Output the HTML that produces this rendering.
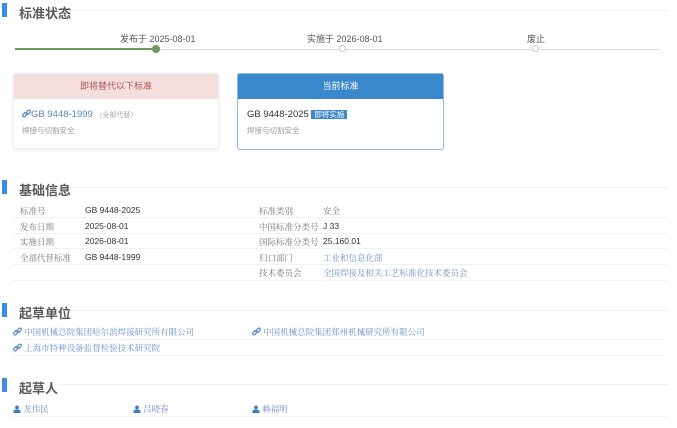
<!DOCTYPE html>
<html><head><meta charset="utf-8"><style>
*{margin:0;padding:0;box-sizing:border-box}
body{width:677px;height:428px;background:#fff;position:relative;overflow:hidden;font-family:"Liberation Sans","Noto Sans CJK SC",sans-serif;color:#444}
.a{position:absolute;white-space:nowrap}
.bar{position:absolute;left:2px;width:5px;height:14px;background:#3a8ee6}
.ht{position:absolute;left:19px;font-size:13px;color:#5a5a5a;font-weight:bold}
.hl{position:absolute;height:1px;background:#eceff2;right:9px}
.s{font-family:"Liberation Serif","Noto Serif CJK SC",serif;font-size:8.5px;color:#777}
.v{font-size:8.5px;color:#333}
.lk{font-family:"Liberation Serif","Noto Serif CJK SC",serif;font-size:8.5px;color:#6b8fc6}
.rl{position:absolute;left:13px;right:9px;height:1px;background:#f0f2f4}
svg{vertical-align:-1px}
</style></head><body>
<svg width="0" height="0" style="position:absolute"><defs>
<symbol id="lnk" viewBox="0 0 10 10"><g fill="none" stroke="#5b86c0" stroke-width="1.4" stroke-linecap="round"><path d="M4.2 5.8l1.6-1.6"/><path d="M5.5 2.7l1-1a1.6 1.6 0 0 1 2.3 2.3l-1.6 1.6a1.6 1.6 0 0 1-2.3 0"/><path d="M4.5 7.3l-1 1a1.6 1.6 0 0 1-2.3-2.3l1.6-1.6a1.6 1.6 0 0 1 2.3 0"/></g></symbol>
<symbol id="usr" viewBox="0 0 10 10"><circle cx="5" cy="3" r="2.3" fill="#3a7cc4"/><path d="M0.5 10v-1.5c0-2 2-3 4.5-3s4.5 1 4.5 3V10z" fill="#3a7cc4"/></symbol>
</defs></svg>

<div class="bar" style="top:3px"></div><div class="ht" style="top:3px">标准状态</div><div class="hl" style="left:68px;top:10px"></div>
<div class="a" style="left:120px;top:32px;font-size:9px;color:#555">发布于 2025-08-01</div>
<div class="a" style="left:307px;top:32px;font-size:9px;color:#555">实施于 2026-08-01</div>
<div class="a" style="left:527px;top:32px;font-size:9px;color:#555">废止</div>
<div class="a" style="left:15px;top:49px;width:645px;height:1px;background:#ddd"></div>
<div class="a" style="left:15px;top:48px;width:141px;height:2px;background:#6a9a5e"></div>
<div class="a" style="left:152px;top:45px;width:8px;height:8px;border-radius:50%;background:#6a9a5e"></div>
<div class="a" style="left:339px;top:45px;width:7px;height:7px;border-radius:50%;background:#fff;border:1px solid #ccc"></div>
<div class="a" style="left:532px;top:45px;width:7px;height:7px;border-radius:50%;background:#fff;border:1px solid #ccc"></div>

<div class="a" style="left:13px;top:73px;width:206px;height:76px;border:1px solid #eee;border-radius:3px;box-shadow:0 1px 3px rgba(0,0,0,.08)">
 <div style="height:25px;background:#f4dede;color:#b05555;font-size:9px;text-align:center;line-height:25px">即将替代以下标准</div>
 <div class="a" style="left:8px;top:35px;font-size:9.5px;color:#5b86c0"><svg width="9" height="9"><use href="#lnk"/></svg>GB 9448-1999 <span style="font-size:7px;color:#aaa">（全部代替）</span></div>
 <div class="a" style="left:8px;top:51px;font-size:7.5px;color:#999">焊接与切割安全</div>
</div>
<div class="a" style="left:237px;top:73px;width:207px;height:77px;border:1px solid #8cbbe3;border-radius:3px">
 <div style="height:25px;background:#3a88cc;color:#fff;font-size:9px;text-align:center;line-height:25px">当前标准</div>
 <div class="a" style="left:9px;top:35px;font-size:9.5px;color:#333">GB 9448-2025 <span style="background:#3a88cc;color:#fff;font-size:7.5px;padding:0 3px">即将实施</span></div>
 <div class="a" style="left:9px;top:51px;font-size:7.5px;color:#999">焊接与切割安全</div>
</div>

<div class="bar" style="top:180px"></div><div class="ht" style="top:180px">基础信息</div><div class="hl" style="left:70px;top:187px"></div>
<div class="a s" style="left:20px;top:205px">标准号</div><div class="a v" style="left:85px;top:205px">GB 9448-2025</div>
<div class="a s" style="left:259px;top:205px">标准类别</div><div class="a s" style="left:323px;top:205px">安全</div>
<div class="rl" style="top:217px"></div>
<div class="a s" style="left:20px;top:221px">发布日期</div><div class="a v" style="left:85px;top:221px">2025-08-01</div>
<div class="a s" style="left:259px;top:221px">中国标准分类号</div><div class="a v" style="left:323px;top:221px">J 33</div>
<div class="rl" style="top:233px"></div>
<div class="a s" style="left:20px;top:236px">实施日期</div><div class="a v" style="left:85px;top:236px">2026-08-01</div>
<div class="a s" style="left:259px;top:236px">国际标准分类号</div><div class="a v" style="left:323px;top:236px">25.160.01</div>
<div class="rl" style="top:248px"></div>
<div class="a s" style="left:20px;top:252px">全部代替标准</div><div class="a v" style="left:85px;top:252px">GB 9448-1999</div>
<div class="a s" style="left:259px;top:252px">归口部门</div><div class="a lk" style="left:323px;top:252px">工业和信息化部</div>
<div class="rl" style="top:264px"></div>
<div class="a s" style="left:259px;top:267px">技术委员会</div><div class="a lk" style="left:323px;top:267px">全国焊接及相关工艺标准化技术委员会</div>
<div class="rl" style="top:280px"></div>

<div class="bar" style="top:303px"></div><div class="ht" style="top:303px">起草单位</div><div class="hl" style="left:70px;top:310px"></div>
<div class="a lk" style="left:13px;top:326px"><svg width="9" height="9"><use href="#lnk"/></svg> 中国机械总院集团哈尔滨焊接研究所有限公司</div>
<div class="a lk" style="left:252px;top:326px"><svg width="9" height="9"><use href="#lnk"/></svg> 中国机械总院集团郑州机械研究所有限公司</div>
<div class="rl" style="top:339px"></div>
<div class="a lk" style="left:13px;top:342px"><svg width="9" height="9"><use href="#lnk"/></svg> 上海市特种设备监督检验技术研究院</div>
<div class="rl" style="top:355px"></div>

<div class="bar" style="top:378px"></div><div class="ht" style="top:378px">起草人</div><div class="hl" style="left:58px;top:384px"></div>
<div class="a lk" style="left:13px;top:403px"><svg width="8" height="8"><use href="#usr"/></svg> 龙伟民</div>
<div class="a lk" style="left:133px;top:403px"><svg width="8" height="8"><use href="#usr"/></svg> 吕晓春</div>
<div class="a lk" style="left:252px;top:403px"><svg width="8" height="8"><use href="#usr"/></svg> 赖福明</div>
<div class="rl" style="top:416px"></div>
</body></html>
